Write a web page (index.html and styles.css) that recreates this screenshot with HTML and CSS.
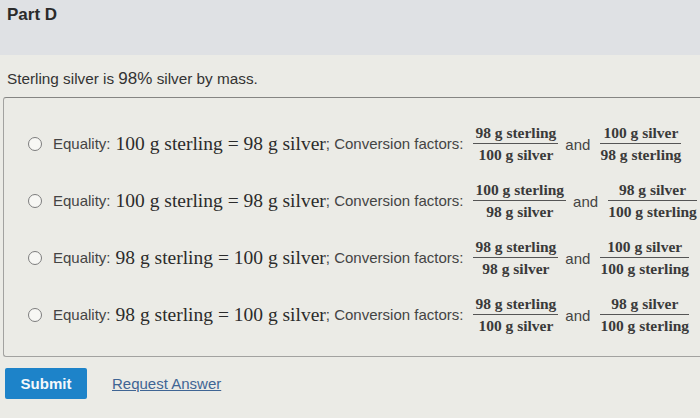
FILE: index.html
```html
<!DOCTYPE html>
<html>
<head>
  <meta charset="utf-8">
  <link rel="stylesheet" href="styles.css">
</head>
<body>
  <div class="part-header">Part D</div>

  <p class="prompt">Sterling silver is <span class="pct">98%</span> silver by mass.</p>

  <div class="answer-box">
    <div class="option">
      <span class="radio"></span>
      <span class="label">Equality:</span>
      <span class="math">100 g sterling = 98 g silver</span><span class="label">; Conversion factors:</span>
      <span class="frac"><span class="num">98 g sterling</span><span class="den">100 g silver</span></span>
      <span class="and">and</span>
      <span class="frac"><span class="num">100 g silver</span><span class="den">98 g sterling</span></span>
    </div>
    <div class="option">
      <span class="radio"></span>
      <span class="label">Equality:</span>
      <span class="math">100 g sterling = 98 g silver</span><span class="label">; Conversion factors:</span>
      <span class="frac"><span class="num">100 g sterling</span><span class="den">98 g silver</span></span>
      <span class="and">and</span>
      <span class="frac"><span class="num">98 g silver</span><span class="den">100 g sterling</span></span>
    </div>
    <div class="option">
      <span class="radio"></span>
      <span class="label">Equality:</span>
      <span class="math">98 g sterling = 100 g silver</span><span class="label">; Conversion factors:</span>
      <span class="frac"><span class="num">98 g sterling</span><span class="den">98 g silver</span></span>
      <span class="and">and</span>
      <span class="frac"><span class="num">100 g silver</span><span class="den">100 g sterling</span></span>
    </div>
    <div class="option">
      <span class="radio"></span>
      <span class="label">Equality:</span>
      <span class="math">98 g sterling = 100 g silver</span><span class="label">; Conversion factors:</span>
      <span class="frac"><span class="num">98 g sterling</span><span class="den">100 g silver</span></span>
      <span class="and">and</span>
      <span class="frac"><span class="num">98 g silver</span><span class="den">100 g sterling</span></span>
    </div>
  </div>

  <div class="actions">
    <button class="submit">Submit</button>
    <a class="request" href="#">Request Answer</a>
  </div>
</body>
</html>
```

FILE: styles.css
```css
body {
  margin: 0;
  background: #ebebe6;
  font-family: "Liberation Sans", Arial, sans-serif;
  color: #3a3a3a;
}
.part-header {
  height: 55px;
  box-sizing: border-box;
  padding: 5px 7px 0;
  background: #dfe1e4;
  font-size: 17px;
  font-weight: bold;
  color: #2b2b2b;
}
.prompt {
  margin: 14px 0 0;
  padding-left: 7px;
  font-size: 15.3px;
  line-height: 20px;
  color: #333;
}
.pct {
  font-size: 17px;
}
.answer-box {
  margin: 8px 0 0 3px;
  height: 260px;
  box-sizing: border-box;
  padding-top: 17px;
  border: 1.5px solid #a2a2a0;
  border-top-color: #858583;
  border-right: none;
  border-radius: 3px 0 0 3px;
}
.option {
  display: flex;
  align-items: center;
  height: 57px;
  padding-left: 24px;
  white-space: nowrap;
}
.radio {
  width: 12px;
  height: 12px;
  border: 1.5px solid #7d7d7d;
  border-radius: 50%;
  background: #f7f7f4;
  margin-right: 11px;
}
.label {
  font-size: 15px;
  color: #444;
}
.math {
  font-family: "Liberation Serif", "Times New Roman", serif;
  font-size: 19.5px;
  color: #2b2b2b;
  margin-left: 5px;
}
.frac {
  display: inline-flex;
  flex-direction: column;
  align-items: center;
  margin-left: 10px;
  font-family: "Liberation Serif", "Times New Roman", serif;
  font-size: 15.5px;
  font-weight: bold;
  color: #3a3a3a;
  line-height: 19px;
}
.num {
  padding: 0 2px 1px;
  border-bottom: 1.5px solid #555;
  align-self: stretch;
  text-align: center;
}
.den {
  padding-top: 1px;
}
.and {
  font-size: 15px;
  color: #444;
  margin: 0 0 0 7px;
  position: relative;
  top: 1px;
}
.actions {
  display: flex;
  align-items: center;
  margin-top: 11px;
  padding-left: 5px;
}
.submit {
  width: 82px;
  height: 31px;
  border: none;
  border-radius: 2px;
  background: #1d83c9;
  color: #f4f8fb;
  font-family: "Liberation Sans", Arial, sans-serif;
  font-size: 15px;
  font-weight: bold;
}
.request {
  margin-left: 25px;
  font-size: 15px;
  color: #3f6594;
  text-decoration: underline;
}
```
